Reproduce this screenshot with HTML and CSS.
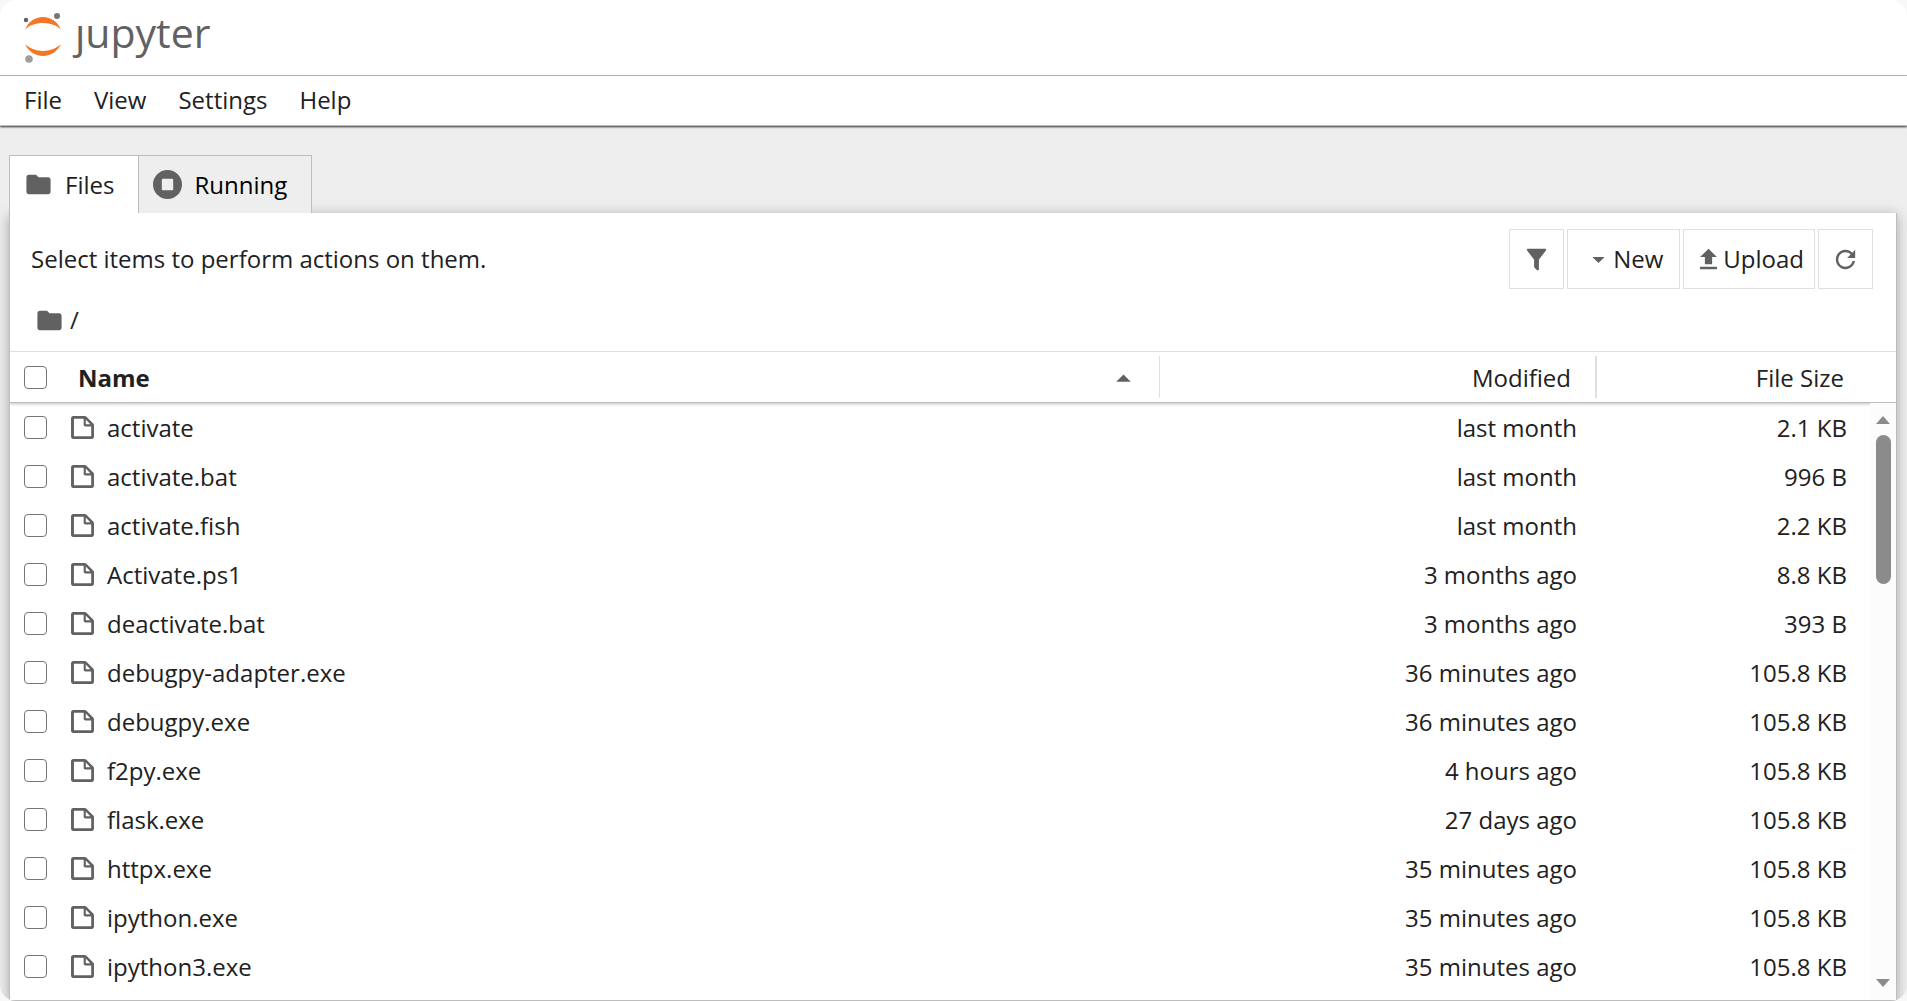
FILE: index.html
```html
<!DOCTYPE html>
<html lang="en">
<head>
    <meta charset="UTF-8">
    <meta name="viewport" content="width=device-width, initial-scale=1.0">
    <title>Home</title>
    <link rel="stylesheet" href="styles.css">
</head>
<body>
    <svg class="sprite" aria-hidden="true">
        <symbol id="icon-folder" viewBox="0 0 24 24">
            <path d="M10 4H4c-1.1 0-1.99.9-1.99 2L2 18c0 1.1.9 2 2 2h16c1.1 0 2-.9 2-2V8c0-1.1-.9-2-2-2h-8l-2-2z"/>
        </symbol>
        <symbol id="icon-file" viewBox="0 0 22 22">
            <path d="M19.3 8.2l-5.5-5.5c-.3-.3-.7-.5-1.2-.5H3.9c-.8.1-1.6.9-1.6 1.8v14.1c0 .9.7 1.6 1.6 1.6h14.2c.9 0 1.6-.7 1.6-1.6V9.4c.1-.5-.1-.9-.4-1.2zm-5.8-3.3l3.4 3.6h-3.4V4.9zm3.9 12.7H4.7c-.1 0-.2 0-.2-.2V4.7c0-.2.1-.3.2-.3h7.2v4.4s0 .8.3 1.1c.3.3 1.1.3 1.1.3h4.3v7.2s-.1.2-.2.2z"/>
        </symbol>
    </svg>

    <div class="app">
        <header class="top-bar">
            <a class="logo" href="#" aria-label="Jupyter">
                <svg width="40" height="52" viewBox="0 0 40 52">
                    <path fill="#f37726" d="M2 18C5 10 12 5 20 5s15 5 18 13c-4-5-11-7-18-7S6 13 2 18z"/>
                    <path fill="#f37726" d="M2 32c3 7 10 12 18 12s15-5 18-12c-4 4-11 7-18 7S6 36 2 32z"/>
                    <circle cx="3" cy="8" r="2.2" fill="#616161"/>
                    <circle cx="34" cy="4" r="3" fill="#767677"/>
                    <circle cx="6" cy="47" r="3.8" fill="#9e9e9e"/>
                </svg>
                <span>ȷupyter</span>
            </a>
        </header>
        <nav class="menu-bar">
            <button type="button">File</button>
            <button type="button">View</button>
            <button type="button">Settings</button>
            <button type="button">Help</button>
        </nav>

        <main>
            <div class="tabs" role="tablist">
                <button class="tab active" type="button" role="tab" aria-selected="true">
                    <svg class="icon"><use href="#icon-folder"/></svg>
                    Files
                </button>
                <button class="tab" type="button" role="tab" aria-selected="false">
                    <svg class="icon" viewBox="0 0 28 28"><path fill-rule="evenodd" d="M14 0a14 14 0 1 0 0 28a14 14 0 1 0 0-28zM9.5 8.5h9q1 0 1 1v9q0 1-1 1h-9q-1 0-1-1v-9q0-1 1-1z"/></svg>
                    Running
                </button>
            </div>

            <section class="panel">
                <div class="toolbar">
                    <p>Select items to perform actions on them.</p>
                    <div class="actions">
                        <button class="icon-only" type="button" aria-label="Filter files">
                            <svg class="icon" viewBox="0 0 24 24"><path d="M14,12V19.88C14.04,20.18 13.94,20.5 13.71,20.71C13.32,21.1 12.69,21.1 12.3,20.71L10.29,18.7C10.06,18.47 9.96,18.16 10,17.87V12H9.97L4.21,4.62C3.87,4.19 3.95,3.56 4.38,3.22C4.57,3.08 4.78,3 5,3H19C19.22,3 19.43,3.08 19.62,3.22C20.05,3.56 20.13,4.19 19.79,4.62L14.03,12H14Z"/></svg>
                        </button>
                        <button class="new" type="button">
                            <svg class="icon" viewBox="0 0 18 18"><path d="M5.2 7.5L9 11.2l3.8-3.7z"/></svg>
                            New
                        </button>
                        <button class="upload" type="button">
                            <svg class="icon" viewBox="0 0 24 24"><path d="M5 20h14v-2H5v2zm0-10h4v6h6v-6h4l-7-7-7 7z"/></svg>
                            Upload
                        </button>
                        <button class="icon-only" type="button" aria-label="Refresh">
                            <svg class="icon" viewBox="0 0 18 18"><path d="M9 13.5c-2.49 0-4.5-2.01-4.5-4.5S6.51 4.5 9 4.5c1.24 0 2.36.52 3.17 1.33L10 8h5V3l-1.76 1.76C12.15 3.68 10.66 3 9 3 5.69 3 3.01 5.69 3.01 9S5.69 15 9 15c2.97 0 5.43-2.16 5.9-5h-1.52c-.46 2-2.24 3.5-4.38 3.5z"/></svg>
                        </button>
                    </div>
                </div>

                <div class="breadcrumbs">
                    <a href="#" aria-label="Root folder"><svg class="icon"><use href="#icon-folder"/></svg></a>
                    <span>/</span>
                </div>

                <div class="listing">
                    <table>
                        <thead>
                            <tr>
                                <th class="check"><input type="checkbox" aria-label="Select all files"></th>
                                <th class="name">
                                    <div class="head">
                                        Name
                                        <svg class="icon" viewBox="0 0 18 18"><path d="M4.5 11L9 6.5l4.5 4.5z"/></svg>
                                    </div>
                                </th>
                                <th class="modified"><div class="head">Modified</div></th>
                                <th class="size"><div class="head">File Size</div></th>
                            </tr>
                        </thead>
                        <tbody id="files"></tbody>
                    </table>
                    <div class="scrollbar" aria-hidden="true">
                        <svg width="14" height="8" viewBox="0 0 14 8"><path d="M0 8L7 0l7 8z"/></svg>
                        <div class="track"><div class="thumb"></div></div>
                        <svg width="14" height="8" viewBox="0 0 14 8"><path d="M0 0h14L7 8z"/></svg>
                    </div>
                </div>
            </section>
        </main>
    </div>

    <script src="script.js"></script>
</body>
</html>
```
FILE: styles.css
```css
:root {
    --text-color: #212121;
    --icon-color: #616161;
    --border-color: #bdbdbd;
    --light-border: #e0e0e0;
    --background-color: #eee;
}

* {
    margin: 0;
    padding: 0;
    box-sizing: border-box;
}

body {
    background: #f8f8f8;
    color: var(--text-color);
    font: 24px/32px 'Segoe UI', 'Open Sans', 'Noto Sans', sans-serif;
}

button {
    font: inherit;
    color: inherit;
    background: none;
    border: none;
    cursor: pointer;
}

.sprite {
    display: none;
}

.icon {
    width: 29px;
    height: 29px;
    flex-shrink: 0;
    fill: var(--icon-color);
}

.app {
    display: flex;
    flex-direction: column;
    height: 100vh;
    background: var(--background-color);
    border-radius: 16px;
    overflow: hidden;
}

.top-bar {
    height: 76px;
    flex-shrink: 0;
    padding: 12px 23px;
    background: white;
    border-bottom: 1px solid var(--border-color);
}

.logo {
    display: inline-flex;
    gap: 12px;
    color: var(--icon-color);
    font-size: 41px;
    line-height: 40px;
    text-decoration: none;
}

.menu-bar {
    display: flex;
    height: 50px;
    flex-shrink: 0;
    padding: 0 8px;
    background: white;
    border-bottom: 1px solid var(--border-color);
    box-shadow: 0 1px 2px rgba(0, 0, 0, 0.8);
}

.menu-bar button {
    padding: 0 16px 2px;
}

main {
    flex: 1;
    min-height: 0;
    display: flex;
    flex-direction: column;
    padding: 29px 10px 0 9px;
}

.tabs {
    display: flex;
    position: relative;
    z-index: 1;
}

.tab {
    display: flex;
    align-items: center;
    gap: 12px;
    height: 58px;
    padding: 0 24px 0 14px;
    color: black;
    background: var(--background-color);
    border: 1px solid var(--border-color);
    border-left: none;
    border-bottom: none;
}

.tab.active {
    color: var(--text-color);
    background: white;
    border-left: 1px solid var(--border-color);
}

.panel {
    flex: 1;
    min-height: 0;
    display: flex;
    flex-direction: column;
    background: white;
    border: 1px solid var(--border-color);
    border-top: none;
    box-shadow: 0 2px 12px rgba(0, 0, 0, 0.3);
}

.toolbar {
    display: flex;
    align-items: center;
    justify-content: space-between;
    padding: 16px 23px 16px 21px;
}

.actions {
    display: flex;
    gap: 3px;
}

.actions button {
    display: flex;
    align-items: center;
    justify-content: center;
    height: 60px;
    border: 1px solid var(--light-border);
}

.actions .icon-only {
    width: 55px;
}

.actions .new {
    padding: 0 16px;
}

.actions .upload {
    padding: 0 10px;
}

.breadcrumbs {
    display: flex;
    align-items: center;
    gap: 6px;
    height: 46px;
    padding: 0 25px 16px;
}

.breadcrumbs a {
    display: flex;
}

.listing {
    position: relative;
    flex: 1;
    min-height: 0;
    overflow: hidden;
    border-top: 1px solid var(--light-border);
}

table {
    width: 100%;
    table-layout: fixed;
    border-collapse: separate;
    border-spacing: 0;
}

thead tr {
    box-shadow: 0 1px 3px rgba(0, 0, 0, 0.25);
}

th {
    height: 51px;
    font-weight: normal;
    text-align: right;
    border-bottom: 1px solid var(--border-color);
}

.head {
    display: flex;
    align-items: center;
    justify-content: flex-end;
    height: 42px;
    padding: 2px 24px 0 0;
    border-right: 1px solid var(--light-border);
}

.check {
    width: 58px;
    text-align: left;
}

.name .head {
    justify-content: space-between;
    padding: 2px 21px 0 10px;
    font-weight: bold;
}

.modified {
    width: 437px;
}

.modified .head {
    border-right-width: 2px;
}

.size {
    width: 299px;
}

.size .head {
    padding-right: 52px;
    border-right: none;
}

td {
    height: 49px;
    text-align: right;
    vertical-align: middle;
}

td.modified {
    padding-right: 20px;
}

td.size {
    padding-right: 49px;
}

.file {
    display: flex;
    align-items: center;
    gap: 10px;
    color: inherit;
    text-decoration: none;
}

input[type="checkbox"] {
    display: block;
    appearance: none;
    width: 23px;
    height: 23px;
    margin-left: 14px;
    background: white;
    border: 1px solid #767676;
    border-radius: 4px;
}

.scrollbar {
    position: absolute;
    top: 51px;
    right: 0;
    bottom: 0;
    width: 26px;
    display: flex;
    flex-direction: column;
    align-items: center;
    gap: 11px;
    padding: 13px 0;
    background: #fcfcfc;
}

.scrollbar svg {
    flex-shrink: 0;
    fill: #8b8b8b;
}

.track {
    flex: 1;
}

.thumb {
    width: 15px;
    height: 28%;
    background: #8b8b8b;
    border-radius: 8px;
}
```
FILE: script.js
```javascript
const files = [
    ['activate', 'last month', '2.1 KB'],
    ['activate.bat', 'last month', '996 B'],
    ['activate.fish', 'last month', '2.2 KB'],
    ['Activate.ps1', '3 months ago', '8.8 KB'],
    ['deactivate.bat', '3 months ago', '393 B'],
    ['debugpy-adapter.exe', '36 minutes ago', '105.8 KB'],
    ['debugpy.exe', '36 minutes ago', '105.8 KB'],
    ['f2py.exe', '4 hours ago', '105.8 KB'],
    ['flask.exe', '27 days ago', '105.8 KB'],
    ['httpx.exe', '35 minutes ago', '105.8 KB'],
    ['ipython.exe', '35 minutes ago', '105.8 KB'],
    ['ipython3.exe', '35 minutes ago', '105.8 KB']
];

document.getElementById('files').innerHTML = files.map(([name, modified, size]) => `
    <tr>
        <td class="check"><input type="checkbox" aria-label="Select ${name}"></td>
        <td><a class="file" href="#"><svg class="icon"><use href="#icon-file"/></svg>${name}</a></td>
        <td class="modified">${modified}</td>
        <td class="size">${size}</td>
    </tr>
`).join('');
```
